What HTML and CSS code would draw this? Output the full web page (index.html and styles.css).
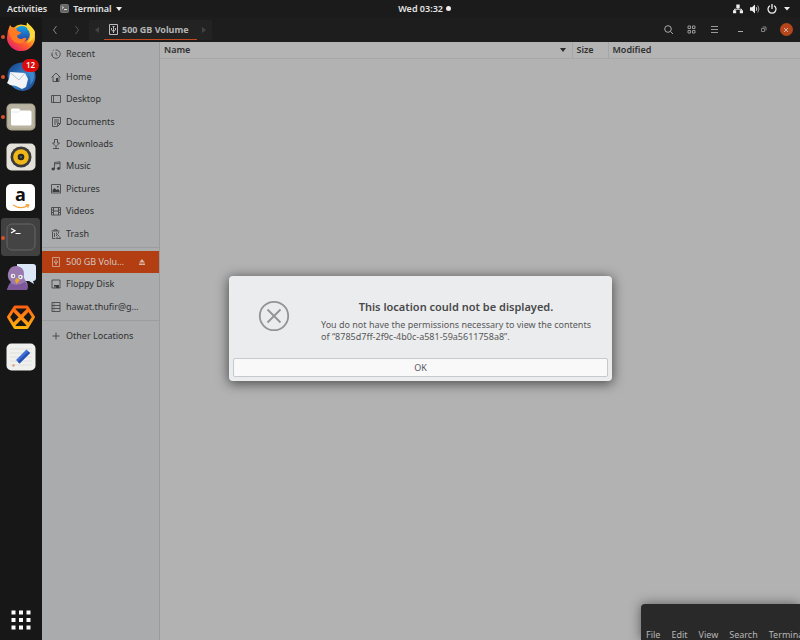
FILE: index.html
```html
<!DOCTYPE html>
<html lang="en">
<head>
<meta charset="utf-8">
<title>Files</title>
<link rel="stylesheet" href="styles.css">
</head>
<body>
<header class="topbar">
  <div class="top-left">
    <button class="top-btn">Activities</button>
    <button class="top-btn app-menu">
      <svg width="9" height="9" viewBox="0 0 9 9"><rect x=".5" y=".5" width="8" height="8" rx="1" fill="#666" stroke="#777"/><path d="M2 2.500l1.500 1L2 4.500M4 5.500h3" fill="none" stroke="#ddd"/></svg>
      Terminal
      <svg width="6" height="4" viewBox="0 0 6 4"><path d="M0 0h6L3 4z" fill="#eee"/></svg>
    </button>
  </div>
  <button class="top-btn clock">Wed 03:32 <span class="notice"></span></button>
  <button class="top-btn status" aria-label="System menu">
    <svg width="10" height="10" viewBox="0 0 10 10"><path d="M3.300 0.500h3.400v3.500H3.300zM0 6.200h3.200v3H0zM6.800 6.200H10v3H6.800z" fill="#eee"/><path d="M5 4v1.200M1.500 6.500V5.200h7v1.300" fill="none" stroke="#eee"/></svg>
    <svg width="10" height="10" viewBox="0 0 10 10"><path d="M0 3.200h2L5 .500v9L2 6.800H0z" fill="#eee"/><path d="M6.200 3.200q1.300 1.800 0 3.600" fill="none" stroke="#ddd"/><path d="M7.700 1.500q2.600 3.500 0 7" fill="none" stroke="#999"/></svg>
    <svg width="10" height="10" viewBox="0 0 10 10"><path d="M3 1.700a4 4 0 1 0 4 0M5 0v5" fill="none" stroke="#eee" stroke-width="1.300"/></svg>
    <svg width="6" height="4" viewBox="0 0 6 4"><path d="M0 0h6L3 3.500z" fill="#eee"/></svg>
  </button>
</header>

<div class="desktop">
  <nav class="dock" aria-label="Dock">
    <button class="launcher running" aria-label="Firefox">
      <svg width="30" height="30" viewBox="0 0 30 30">
        <defs>
          <linearGradient id="fox" x1=".85" y1=".05" x2=".2" y2=".95"><stop offset="0" stop-color="#fff04a"/><stop offset=".35" stop-color="#ffb51f"/><stop offset=".65" stop-color="#ff5b2c"/><stop offset="1" stop-color="#e5206d"/></linearGradient>
          <linearGradient id="globe" x1="0" y1="0" x2="0" y2="1"><stop offset="0" stop-color="#12a4e8"/><stop offset="1" stop-color="#2a3aa5"/></linearGradient>
        </defs>
        <path d="M4 3q1 2.500 4 2.500 3-3 7-3l6 1q-1-2 .5-3 1 3 4 5 3.500 3.500 3.500 9.500a14 13.500 0 0 1-28 1Q1 9 4 3z" fill="url(#fox)"/>
        <circle cx="16" cy="12" r="8" fill="url(#globe)"/>
        <path d="M3 8q4-3 8-.5 0 2 4 2.500 0 2-4 3.500 .5 4 5 3.500 3-2 4.500-.5-2 5-8 5Q4 20 3 8z" fill="#ff7a24"/>
        <path d="M21 1q-1 6 2 8 3 7-2 12 8-3 8-11-2-5-8-9z" fill="#ffd83a"/>
      </svg>
    </button>
    <button class="launcher running" aria-label="Thunderbird, 12 unread">
      <svg width="30" height="30" viewBox="0 0 30 30">
        <defs><linearGradient id="bird" x1="0" y1="0" x2="1" y2="1"><stop offset="0" stop-color="#123d83"/><stop offset=".55" stop-color="#3582c9"/><stop offset="1" stop-color="#173e86"/></linearGradient></defs>
        <path d="M6 4Q14-2 23 2q7 5 6.500 14Q28 28 17 29 8 28 3 21 -1 10 6 4z" fill="url(#bird)"/>
        <path d="M4 10l15 1 3 6-2 8-4 2-6-3-6-1-3-2 2-4z" fill="#f3f4f7"/>
        <path d="M4 10.500l9 7.500 6-7" fill="none" stroke="#b7c4d3"/>
        <path d="M20 9q6 5 4 14 5-5 4-11-3-5-8-3z" fill="#3f86cc"/>
      </svg>
      <span class="badge">12</span>
    </button>
    <button class="launcher running" aria-label="Files">
      <svg width="30" height="28" viewBox="0 0 30 28"><rect x=".5" y=".5" width="29" height="27" rx="5" fill="#aaa690"/><rect x="2" y="1.500" width="26" height="24" rx="4" fill="#b8b4a1"/><path d="M5 7q0-1.500 1.500-1.500H13l1.500 2H24q1.500 0 1.500 1.500v12q0 1.500-1.500 1.500H6.500Q5 22.500 5 21z" fill="#fff"/><path d="M5.500 9h7l2-1.500" fill="none" stroke="#ddd" stroke-width=".7"/></svg>
    </button>
    <button class="launcher" aria-label="Rhythmbox">
      <svg width="30" height="28" viewBox="0 0 30 28"><rect x=".5" y=".5" width="29" height="27" rx="5" fill="#e4e0da"/><circle cx="15" cy="14" r="10.500" fill="#393a39"/><circle cx="15" cy="14" r="7.800" fill="#efb719"/><circle cx="15" cy="14" r="3.300" fill="#252925"/><circle cx="15" cy="14" r="1.200" fill="#565a56"/></svg>
    </button>
    <button class="launcher" aria-label="Amazon">
      <span class="amazon-tile">a<svg width="18" height="5" viewBox="0 0 18 5"><path d="M1 1q8 5 15 .5M13.500 0.800l3.200-.1-1 3" fill="none" stroke="#f3a23a" stroke-width="1.200"/></svg></span>
    </button>
    <button class="launcher running active" aria-label="Terminal">
      <svg width="30" height="28" viewBox="0 0 30 28"><rect x="1" y="1" width="28" height="26" rx="5" fill="#444" stroke="#666"/><path d="M5 5.500l4 2.200-4 2.200M9.500 10.500h5" fill="none" stroke="#fff" stroke-width="1.200"/></svg>
    </button>
    <button class="launcher" aria-label="Pidgin">
      <svg width="30" height="28" viewBox="0 0 30 28">
        <path d="M11 1h16q3 0 3 3v11q0 3-3 3l1 3-5-3H11z" fill="#dbe7f6"/>
        <path d="M2 10Q4 2 11 3q7 1 7 8-1 4 2 7 3 4 1 9H1q1-4 4-8-4-3-3-9z" fill="#9a78b0"/>
        <path d="M4 20q7 4 15-1 3 3 2 8H1q1-4 3-7z" fill="#7d589a"/>
        <circle cx="7" cy="13" r="2.300" fill="#eee"/><circle cx="14.500" cy="14" r="2.300" fill="#eee"/><circle cx="7.300" cy="13" r=".8" fill="#333"/><circle cx="14.200" cy="14" r=".8" fill="#333"/>
        <path d="M10 15l4 2-3.500 4-1.500-3z" fill="#e9a62b"/>
      </svg>
    </button>
    <button class="launcher" aria-label="Hexchat">
      <svg width="30" height="28" viewBox="0 0 30 28">
        <defs><linearGradient id="hex" gradientUnits="userSpaceOnUse" x1="0" y1="2" x2="0" y2="26"><stop offset="0" stop-color="#ff5a12"/><stop offset="1" stop-color="#ffb80e"/></linearGradient></defs>
        <path d="M9 4h12L27.500 14 21 24.500H9L2.500 14z" fill="none" stroke="url(#hex)" stroke-width="3" stroke-linejoin="round"/><path d="M7 6l16 16.500M23 6L7 22.500" fill="none" stroke="url(#hex)" stroke-width="3.500"/>
      </svg>
    </button>
    <button class="launcher" aria-label="Text Editor">
      <svg width="30" height="28" viewBox="0 0 30 28"><rect x=".5" y=".5" width="29" height="27" rx="5" fill="#f0f0ee"/><path d="M4 6h22M4 10h22M4 14h22M4 18h22M4 22h22" stroke="#dcdcdc" stroke-width=".8"/><path d="M20.500 6.500l3.500 3.500-10.500 10.500-3.500-3.500z" fill="#3c6fd8"/><path d="M22.500 8.500l1.500 1.500-10.500 10.500-1.800-1.800z" fill="#264fae"/><circle cx="7.500" cy="22.500" r="1.200" fill="#d8a07a"/></svg>
    </button>
    <button class="launcher apps" aria-label="Show Applications">
      <svg width="20" height="20" viewBox="0 0 20 20"><path d="M.5.5h4v4h-4zM8 .5h4v4H8zM15.500.5h4v4h-4zM.5 8h4v4h-4zM8 8h4v4H8zM15.500 8h4v4h-4zM.5 15.500h4v4h-4zM8 15.500h4v4H8zM15.500 15.500h4v4h-4z" fill="#fff"/></svg>
    </button>
  </nav>

  <main class="files">
    <div class="headerbar">
      <button class="hb nav" aria-label="Back"><svg width="6" height="10" viewBox="0 0 6 10"><path d="M4.500 1L1.500 5l3 4" fill="none" stroke="#888"/></svg></button>
      <button class="hb nav" aria-label="Forward"><svg width="6" height="10" viewBox="0 0 6 10"><path d="M1.500 1l3 4-3 4" fill="none" stroke="#555"/></svg></button>
      <div class="path">
        <button class="hb step" aria-label="Previous"><svg width="4" height="6" viewBox="0 0 4 6"><path d="M4 0v6L0 3z" fill="#444"/></svg></button>
        <button class="hb crumb"><svg width="9" height="11" viewBox="0 0 9 11"><path d="M.5.5h8v10h-8zM4.500 2v7M2.500 4v2l2 1.500 2-1.500V4M3.500 3l1-1 1 1" fill="none" stroke="#bbb"/></svg>500 GB Volume</button>
        <button class="hb step" aria-label="Next"><svg width="4" height="6" viewBox="0 0 4 6"><path d="M0 0v6l4-3z" fill="#444"/></svg></button>
      </div>
      <div class="tools">
        <button class="hb tool" aria-label="Search"><svg width="9" height="9" viewBox="0 0 9 9"><circle cx="4" cy="4" r="3.300" fill="none" stroke="#aaa"/><path d="M6.500 6.500L9 9" stroke="#aaa"/></svg></button>
        <button class="hb tool" aria-label="Grid view"><svg width="9" height="9" viewBox="0 0 9 9"><path d="M1 1h2.500v2.500H1zM5.500 1H8v2.500H5.500zM1 5.500h2.500V8H1zM5.500 5.500H8V8H5.500z" fill="none" stroke="#999"/></svg></button>
        <button class="hb tool" aria-label="Menu"><svg width="9" height="9" viewBox="0 0 9 9"><path d="M1 1.500h7M1 4.500h7M1 7.500h7" stroke="#999"/></svg></button>
      </div>
      <div class="wincontrols">
        <button class="hb tool" aria-label="Minimize"><svg width="7" height="7" viewBox="0 0 7 7"><path d="M1 5.500h5" stroke="#aaa"/></svg></button>
        <button class="hb tool" aria-label="Restore"><svg width="7" height="7" viewBox="0 0 7 7"><path d="M1.500 2.500h3v3h-3zM2.500 1h3.500v3.500" fill="none" stroke="#999" stroke-width=".8"/></svg></button>
        <button class="hb tool" aria-label="Close"><span class="close"><svg width="6" height="6" viewBox="0 0 6 6"><path d="M1 1l4 4M5 1L1 5" stroke="#d8b3a4"/></svg></span></button>
      </div>
    </div>

    <div class="panes">
      <aside class="sidebar">
        <div class="places main-places">
          <a href="#" class="place"><svg viewBox="0 0 10 10"><path d="M4.500 1a4.200 4.200 0 1 1-3.300 2.500M5 3v2.500l1.500 1"/><path d="M1 5.500v1M1.800 1.800l1-.8"/></svg>Recent</a>
          <a href="#" class="place"><svg viewBox="0 0 10 10"><path d="M.5 5.500L5 1l4.500 4.500M2 4.500v5h6v-5"/><path d="M5 6h2v3.500H5z" fill="#3b3b3b" stroke="none"/></svg>Home</a>
          <a href="#" class="place"><svg viewBox="0 0 10 10"><path d="M.5 1.500h9v7h-9zM2.500 1.500v7"/></svg>Desktop</a>
          <a href="#" class="place"><svg viewBox="0 0 10 10"><path d="M1.500.5h8v6l-3 3h-5zM3 3h5M3 5h5M3 7h2M6.500 9V6.500H9"/></svg>Documents</a>
          <a href="#" class="place"><svg viewBox="0 0 10 10"><path d="M3.500.5h3v3.500h2L5 7.500 1.500 4h2zM2 9.500h6M5 7.500v2"/></svg>Downloads</a>
          <a href="#" class="place"><svg viewBox="0 0 10 10"><path d="M3.500 8V1.500L9 .8V7M3.500 3L9 2.300"/><path d="M.8 8a1.300 1 0 0 0 2.700 0 1.300 1 0 0 0-2.700 0M6.300 7.500a1.300 1 0 0 0 2.700 0 1.300 1 0 0 0-2.700 0" fill="#3b3b3b"/></svg>Music</a>
          <a href="#" class="place"><svg viewBox="0 0 10 10"><path d="M.5.5h9v8.500h-9z"/><path d="M1.500 8V6l2-2 2 2 1.500-1L8.500 6.500V8zM6 2h1.500v1.500H6z" fill="#3b3b3b" stroke="none"/></svg>Pictures</a>
          <a href="#" class="place"><svg viewBox="0 0 10 10"><path d="M.5 1.500h9v7.500h-9zM2.500 1.500V9M7.500 1.500V9M2.500 5h5M.5 4h2M.5 6.500h2M7.500 4h2M7.500 6.500h2"/></svg>Videos</a>
          <a href="#" class="place"><svg viewBox="0 0 10 10"><path d="M.5 2h8M3 2V.8h3V2M1.500 3v6.500h3M3.500 4v4M5.500 3.500v2M7.500 3v1.500M5 7l1.500-1.500L8 7M8.500 7.500l1 2h-4l1-2"/></svg>Trash</a>
        </div>
        <div class="places devices">
          <a href="#" class="place selected"><svg viewBox="0 0 10 10"><path d="M1.500.5h7v9h-7zM5 2v6M3.500 4v1.500L5 6.500l1.500-1V4"/></svg><span class="name">500 GB Volu…</span><svg class="eject" viewBox="0 0 6 6"><path d="M3 0l3 3.500H0zM0 4.500h6V6H0z"/></svg></a>
          <a href="#" class="place"><svg viewBox="0 0 10 10"><path d="M1 1h8v8H1z"/><path d="M3 6h5v3H3z" fill="#3b3b3b" stroke="none"/><path d="M4 7v2" stroke="#a9abad"/></svg>Floppy Disk</a>
          <a href="#" class="place"><svg viewBox="0 0 10 10"><path d="M1 .5h8v9H1zM1 3.500h8M1 6.500h8M2.500 2h1M2.500 5h1M2.500 8h1"/></svg>hawat.thufir@g…</a>
        </div>
        <div class="places other">
          <a href="#" class="place"><svg viewBox="0 0 10 10"><path d="M5 1.500v7M1.500 5h7"/></svg>Other Locations</a>
        </div>
      </aside>
      <table class="listing">
        <thead><tr>
          <th><span class="sorted">Name <svg width="6" height="4" viewBox="0 0 6 4"><path d="M0 0h6L3 4z" fill="#2b2b2b"/></svg></span></th>
          <th class="size">Size</th>
          <th class="modified">Modified</th>
        </tr></thead>
      </table>
    </div>
  </main>
</div>

<section class="dialog" role="alertdialog" aria-labelledby="dlg-title">
  <div class="message">
    <svg class="error" width="32" height="32" viewBox="0 0 32 32"><circle cx="16" cy="16" r="14.200" fill="none" stroke="#929394" stroke-width="1.800"/><path d="M9.500 9.500l13 13M22.500 9.500l-13 13" stroke="#929394" stroke-width="1.800"/></svg>
    <div class="copy">
      <h1 id="dlg-title">This location could not be displayed.</h1>
      <p>You do not have the permissions necessary to view the contents<br>of “8785d7ff-2f9c-4b0c-a581-59a5611758a8”.</p>
    </div>
  </div>
  <button class="ok">OK</button>
</section>

<section class="terminal" aria-label="Terminal window">
  <div class="menubar"><button>File</button><button>Edit</button><button>View</button><button>Search</button><button>Terminal</button></div>
</section>
</body>
</html>
```
FILE: styles.css
```css
* { box-sizing: border-box; }
body {
  margin: 0;
  height: 100vh;
  overflow: hidden;
  display: flex;
  flex-direction: column;
  position: relative;
  background: #b2b2b2;
  font: 9px/12px "Noto Sans", "Open Sans", sans-serif;
  color: #303030;
}
button { margin: 0; padding: 0; border: 0; background: none; color: inherit; font: inherit; }
svg { display: block; flex: none; }
a { color: inherit; text-decoration: none; }

.topbar {
  height: 17px;
  flex: none;
  display: grid;
  grid-template-columns: 15fr auto 13fr;
  align-items: center;
  padding: 0 10px 0 7px;
  background: #1b1b1b;
  color: #e4e4e4;
  font-weight: 600;
}
.top-left { display: flex; gap: 13px; }
.top-btn { display: flex; align-items: center; gap: 4px; white-space: nowrap; }
.notice { width: 5px; height: 5px; border-radius: 50%; background: #eee; }
.clock { gap: 3px; }
.status { justify-self: end; gap: 7px; }

.desktop { flex: 1; min-height: 0; display: flex; }
.dock {
  width: 42px;
  flex: none;
  display: flex;
  flex-direction: column;
  background: #171717;
}
.launcher {
  position: relative;
  width: 41px;
  height: 40px;
  display: flex;
  align-items: center;
  justify-content: center;
}
.running::before {
  content: "";
  position: absolute;
  left: 1px;
  top: 18px;
  width: 4px;
  height: 4px;
  border-radius: 50%;
  background: #d8502e;
}
.active { background: #414141; border: 1px solid #171717; border-radius: 4px; }
.active::before { left: 0; }
.badge {
  position: absolute;
  left: 22px;
  top: 2px;
  width: 17px;
  height: 13px;
  border-radius: 7px;
  background: #dc0a0a;
  color: #fff;
  font-size: 8px;
  font-weight: 600;
}
.amazon-tile {
  width: 29px;
  height: 27px;
  border-radius: 5px;
  background: #fff;
  color: #111;
  display: flex;
  flex-direction: column;
  align-items: center;
  font: bold 18px/20px "Open Sans", sans-serif;
}
.apps { margin-top: auto; }

.files { flex: 1; min-width: 0; display: flex; flex-direction: column; }
.headerbar {
  height: 25px;
  flex: none;
  display: flex;
  align-items: center;
  background: #1d1d1d;
  color: #b5b5b5;
  padding: 0 3px 0 2px;
}
.hb { display: flex; align-items: center; justify-content: center; }
.nav { width: 22px; height: 20px; }
.path { display: flex; height: 20px; margin-left: 1px; background: #232323; border-radius: 2px; }
.step { width: 15px; }
.crumb { gap: 4px; padding: 0 8px 0 5px; font-weight: 700; box-shadow: inset 0 -1px #c24a1c; }
.tools { display: flex; gap: 1px; margin-left: auto; }
.wincontrols { display: flex; gap: 1px; margin-left: 4px; }
.tool { width: 22px; height: 20px; }
.close { width: 13px; height: 13px; border-radius: 50%; background: #b5451b; display: grid; place-items: center; }

.panes { flex: 1; min-height: 0; display: flex; }
.sidebar { width: 118px; flex: none; background: #a9abad; border-right: 1px solid #999b9d; }
.places { display: grid; grid-auto-rows: 1fr; }
.main-places { height: 203px; padding-top: 1px; }
.devices { height: 74px; padding: 3px 0 2px; margin-top: 2px; border: solid #9b9d9f; border-width: 1px 0; }
.other { height: 26px; padding-top: 3px; }
.place { display: flex; align-items: center; gap: 5px; padding: 0 14px 0 9px; white-space: nowrap; }
.place svg { width: 10px; height: 10px; fill: none; stroke: #3b3b3b; stroke-width: 0.8; }
.selected { background: #b33e11; color: #d2c6c0; }
.selected svg { stroke: #d8b3a4; }
.place .eject { width: 6px; height: 6px; margin-left: auto; fill: #d8b3a4; stroke: none; }

.listing { flex: 1; align-self: flex-start; border-collapse: collapse; table-layout: fixed; background: #b4b4b4; }
.listing th { height: 16px; padding: 0 4px; text-align: left; font-weight: 600; border-bottom: 1px solid #a9a9a9; }
.listing .size { width: 36px; border-left: 1px solid #a6a6a6; }
.listing .modified { width: 192px; border-left: 1px solid #a6a6a6; }
.sorted { display: flex; align-items: center; justify-content: space-between; padding-right: 2px; }

.dialog {
  position: absolute;
  left: 229px;
  top: 276px;
  width: 383px;
  padding: 0 4px 4px;
  border-radius: 4px;
  background: #ebeced;
  color: #57585a;
  box-shadow: 0 2px 12px 1px rgba(0, 0, 0, 0.55);
}
.message { display: flex; gap: 31px; padding: 24px 25px 15px; }
.copy { flex: 1; white-space: nowrap; }
.dialog h1 { margin: 0 0 5px; font-size: 11px; line-height: 14px; font-weight: 600; text-align: center; color: #48494b; }
.dialog p { margin: 0; line-height: 12px; }
.ok { display: block; width: 100%; height: 19px; border: 1px solid #c6c9cd; border-radius: 2px; background: #f9f9fa; }

.terminal {
  position: absolute;
  left: 641px;
  right: 0;
  bottom: 0;
  height: 36px;
  padding-top: 25px;
  overflow: hidden;
  border-radius: 4px 0 0 0;
  background: #2a2929;
  color: #b6b6b6;
  box-shadow: 0 0 12px rgba(0, 0, 0, 0.5);
}
.menubar { display: flex; gap: 11px; padding-left: 5px; }
```
